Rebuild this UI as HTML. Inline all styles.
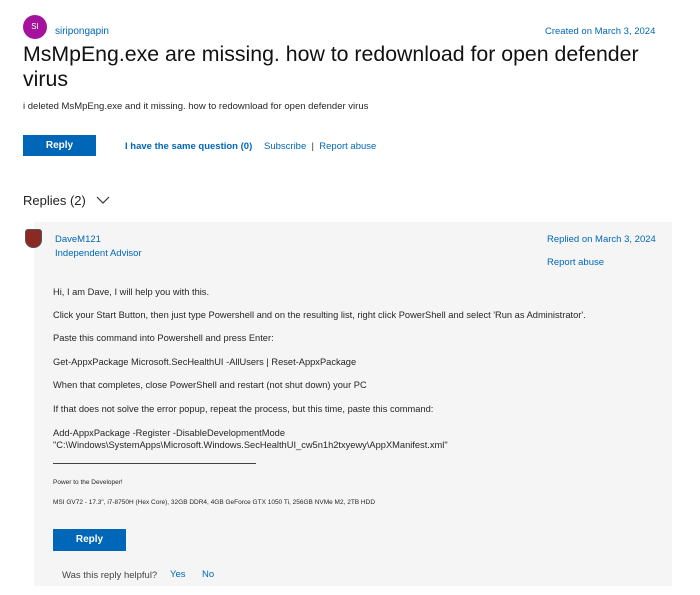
<!DOCTYPE html><html><head><style>
body{margin:0;width:700px;height:595px;background:#fff;font-family:"Liberation Sans",sans-serif;position:relative;overflow:hidden;color:#1b1b1b}
.a{position:absolute;white-space:nowrap}
.l{color:#0067b8}
.btn{position:absolute;background:#0067b8;color:#fff;font-size:10px;font-weight:bold;text-align:center}
.p{font-size:9.3px;color:#262626}
</style></head><body>
<div class="a" style="left:23px;top:15px;width:24px;height:24px;border-radius:50%;background:#a5139c;color:#fff;font-size:8px;line-height:24px;text-align:center">SI</div>
<div class="a l" style="left:55px;top:26px;font-size:10px">siripongapin</div>
<div class="a l" style="left:545px;top:26px;font-size:9.5px">Created on March 3, 2024</div>
<div class="a" style="left:23px;top:42px;font-size:21.3px;line-height:25px;color:#111">MsMpEng.exe are missing. how to redownload for open defender<br>virus</div>
<div class="a p" style="left:23px;top:101px;font-size:9.5px">i deleted MsMpEng.exe and it missing. how to redownload for open defender virus</div>
<div class="btn" style="left:23px;top:135px;width:73px;height:21px;line-height:21px">Reply</div>
<div class="a l" style="left:125px;top:141px;font-size:9.5px;font-weight:bold">I have the same question (0)</div>
<div class="a l" style="left:264px;top:141px;font-size:9.5px">Subscribe &nbsp;<span style="color:#333">|</span>&nbsp; Report abuse</div>
<div class="a" style="left:23px;top:193px;font-size:13px;color:#222">Replies (2)</div>
<svg class="a" style="left:96px;top:195px" width="14" height="10"><path d="M1 2 L7 8 L13 2" fill="none" stroke="#333" stroke-width="1.2"/></svg>
<div class="a" style="left:34px;top:222px;width:638px;height:364px;background:#f5f5f5"></div>
<div class="a" style="left:25px;top:229px;width:15px;height:17px;border-radius:3px 3px 8px 8px;background:#8b2a22;border:1px solid #555"></div>
<div class="a l" style="left:55px;top:234px;font-size:9.5px">DaveM121</div>
<div class="a l" style="left:55px;top:248px;font-size:9.5px">Independent Advisor</div>
<div class="a l" style="left:547px;top:234px;font-size:9.5px">Replied on March 3, 2024</div>
<div class="a l" style="left:547px;top:257px;font-size:9.5px">Report abuse</div>
<div class="a p" style="left:53px;top:287px">Hi, I am Dave, I will help you with this.</div>
<div class="a p" style="left:53px;top:310px">Click your Start Button, then just type Powershell and on the resulting list, right click PowerShell and select 'Run as Administrator'.</div>
<div class="a p" style="left:53px;top:333px">Paste this command into Powershell and press Enter:</div>
<div class="a p" style="left:53px;top:357px">Get-AppxPackage Microsoft.SecHealthUI -AllUsers | Reset-AppxPackage</div>
<div class="a p" style="left:53px;top:380px">When that completes, close PowerShell and restart (not shut down) your PC</div>
<div class="a p" style="left:53px;top:404px">If that does not solve the error popup, repeat the process, but this time, paste this command:</div>
<div class="a p" style="left:53px;top:427px;line-height:12px">Add-AppxPackage -Register -DisableDevelopmentMode<br>"C:\Windows\SystemApps\Microsoft.Windows.SecHealthUI_cw5n1h2txyewy\AppXManifest.xml"</div>
<div class="a" style="left:53px;top:463px;width:203px;height:1px;background:#444"></div>
<div class="a p" style="left:53px;top:479px;font-size:6.5px">Power to the Developer!</div>
<div class="a p" style="left:53px;top:499px;font-size:6.5px">MSI GV72 - 17.3", i7-8750H (Hex Core), 32GB DDR4, 4GB GeForce GTX 1050 Ti, 256GB NVMe M2, 2TB HDD</div>
<div class="btn" style="left:53px;top:529px;width:73px;height:22px;line-height:22px">Reply</div>
<div class="a" style="left:62px;top:570px;font-size:9.5px;color:#444">Was this reply helpful?</div>
<div class="a l" style="left:170px;top:569px;font-size:9.5px">Yes</div>
<div class="a l" style="left:202px;top:569px;font-size:9.5px">No</div>
</body></html>
